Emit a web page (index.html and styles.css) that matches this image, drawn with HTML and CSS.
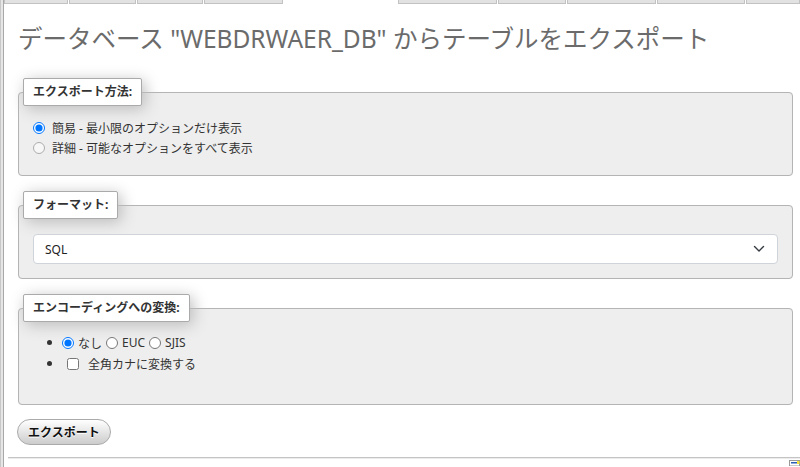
FILE: index.html
```html
<!DOCTYPE html>
<html lang="ja">
<head>
<meta charset="utf-8">
<title>エクスポート</title>
<link rel="stylesheet" href="styles.css">
</head>
<body>
<div class="frame">
  <div class="edge"></div>
  <main class="page">
    <div class="tabs">
      <span class="tab"></span>
      <span class="tab"></span>
      <span class="tab"></span>
      <span class="tab"></span>
      <span class="tab active"></span>
      <span class="tab"></span>
      <span class="tab"></span>
      <span class="tab"></span>
      <span class="tab"></span>
      <span class="tab last"></span>
    </div>

    <h2 class="title">データベース "WEBDRWAER_DB" からテーブルをエクスポート</h2>

    <fieldset class="box box-method">
      <legend class="legend">エクスポート方法:</legend>
      <div class="opt">
        <input type="radio" name="method" id="quick" class="radio" checked>
        <label for="quick">簡易 - 最小限のオプションだけ表示</label>
      </div>
      <div class="opt">
        <input type="radio" name="method" id="custom" class="radio radio-light">
        <label for="custom">詳細 - 可能なオプションをすべて表示</label>
      </div>
    </fieldset>

    <fieldset class="box box-format">
      <legend class="legend">フォーマット:</legend>
      <div class="select-wrap">
        <select class="select">
          <option>SQL</option>
        </select>
        <svg class="chevron" width="12" height="8" viewBox="0 0 12 8"><polyline points="1.5,1.5 6,6 10.5,1.5" fill="none" stroke="#343a40" stroke-width="1.4" stroke-linecap="round" stroke-linejoin="round"/></svg>
      </div>
    </fieldset>

    <fieldset class="box box-enc">
      <legend class="legend">エンコーディングへの変換:</legend>
      <ul class="list">
        <li class="item">
          <input type="radio" name="enc" id="enc-none" class="radio" checked>
          <label for="enc-none">なし</label>
          <input type="radio" name="enc" id="enc-euc" class="radio">
          <label for="enc-euc">EUC</label>
          <input type="radio" name="enc" id="enc-sjis" class="radio">
          <label for="enc-sjis">SJIS</label>
        </li>
        <li class="item">
          <input type="checkbox" id="kana" class="chk">
          <label for="kana">全角カナに変換する</label>
        </li>
      </ul>
    </fieldset>

    <div class="actions">
      <button class="btn" type="button">エクスポート</button>
    </div>

    <hr class="rule">
    <div class="foot">
      <svg class="foot-icon" width="11" height="6" viewBox="0 0 11 6"><rect x="0.5" y="0.5" width="10" height="5.5" fill="#fff" stroke="#999"/><rect x="2" y="2" width="6" height="1.5" fill="#2b5fb4"/><rect x="8" y="1" width="2.5" height="3" fill="#f2e23a"/></svg>
    </div>
  </main>
</div>
</body>
</html>
```
FILE: styles.css
```css
* { box-sizing: border-box; }

html, body {
  margin: 0;
  padding: 0;
  background: #fff;
}

body {
  font-family: "Noto Sans", "Noto Sans CJK JP", sans-serif;
  font-size: 12px;
  color: #333;
  overflow: hidden;
}

.frame {
  display: flex;
  height: 467px;
}

.edge {
  flex: none;
  width: 4px;
  border-left: 1px solid #c8c8c8;
  border-right: 1px solid #a8a8a8;
  background: #e6e6e6;
}

.page {
  flex: 1;
  min-width: 0;
  display: flex;
  flex-direction: column;
  padding: 0 7px 0 14px;
}

/* tabs strip */
.tabs {
  display: flex;
  height: 4px;
  margin: 0 -7px 0 -14px;
}

.tab {
  flex: none;
  height: 4px;
  margin-right: 1px;
  background: #e2e2e2;
  border: 1px solid #c2c2c2;
  border-top: none;
}
.tab:nth-child(1) { width: 64px; }
.tab:nth-child(2) { width: 67px; }
.tab:nth-child(3) { width: 66px; }
.tab:nth-child(4) { width: 79px; }
.tab:nth-child(5) { width: 113px; }
.tab:nth-child(6) { width: 99px; }
.tab:nth-child(7) { width: 68px; }
.tab:nth-child(8) { width: 89px; }
.tab:nth-child(9) { width: 88px; }
.tab.last { flex: 1; margin-right: 0; }
.tab.active { background: transparent; border-color: transparent; }

/* title */
.title {
  margin: 20px 0 0;
  font-size: 24.5px;
  line-height: 29px;
  font-weight: normal;
  color: #6b6b6b;
  white-space: nowrap;
}

/* fieldsets */
.box {
  margin: 15px 0 0;
  min-width: 0;
  border: 1px solid #b4b4b4;
  border-radius: 4px;
  background: #eee;
  padding: 12px 14px 17px;
}

.box-method { margin-top: 25px; }
.box-format { padding: 15px 14px 14px; }
.box-enc { padding: 10px 14px 30px; }

.legend {
  margin-left: -10px;
  padding: 5px 9px;
  font-size: 12px;
  line-height: 16px;
  font-weight: bold;
  color: #333;
  background: #fff;
  border: 1px solid #aaa;
  border-radius: 2px;
  box-shadow: 3px 3px 15px #bbb;
}

.opt {
  display: flex;
  align-items: center;
  height: 20px;
  gap: 7px;
}

.radio {
  width: 12px;
  height: 12px;
  margin: 0;
  flex: none;
}

.radio-light {
  opacity: 0.55;
}

/* select */
.select-wrap {
  position: relative;
}

.select {
  display: block;
  width: 100%;
  height: 30px;
  margin: 0;
  padding: 0 30px 0 11px;
  appearance: none;
  -webkit-appearance: none;
  font-family: "Noto Sans", "Noto Sans CJK JP", sans-serif;
  font-size: 12px;
  color: #222;
  background: #fff;
  border: 1px solid #ced4da;
  border-radius: 4px;
}

.chevron {
  position: absolute;
  right: 13px;
  top: 11px;
  pointer-events: none;
}

/* encoding list */
.list {
  list-style: none;
  margin: 0;
  padding: 0 0 0 14px;
}

.item {
  display: flex;
  align-items: center;
  height: 21px;
  gap: 4px;
}

.item::before {
  content: "";
  flex: none;
  width: 5px;
  height: 5px;
  margin-right: 6px;
  border-radius: 50%;
  background: #333;
}

.chk {
  width: 12px;
  height: 12px;
  margin: 0 5px 0 5px;
  flex: none;
}

/* button */
.actions {
  display: flex;
  margin-top: 14px;
}

.btn {
  margin-left: -1px;
  height: 26px;
  padding: 0 10px;
  font-family: "Noto Sans", "Noto Sans CJK JP", sans-serif;
  font-size: 12px;
  font-weight: bold;
  color: #111;
  border: 1px solid #aaa;
  border-radius: 13px;
  background: linear-gradient(#fff, #ccc);
  text-shadow: 0 1px 0 #fff;
}

.rule {
  margin: 12px -7px 0 -10px;
  height: 0;
  border: none;
  border-top: 1px solid #c4c4c4;
  border-bottom: 1px solid #ececec;
}

.foot {
  display: flex;
  justify-content: flex-end;
  margin: 1px -7px 0 0;
}

.foot-icon {
  display: block;
}
```
